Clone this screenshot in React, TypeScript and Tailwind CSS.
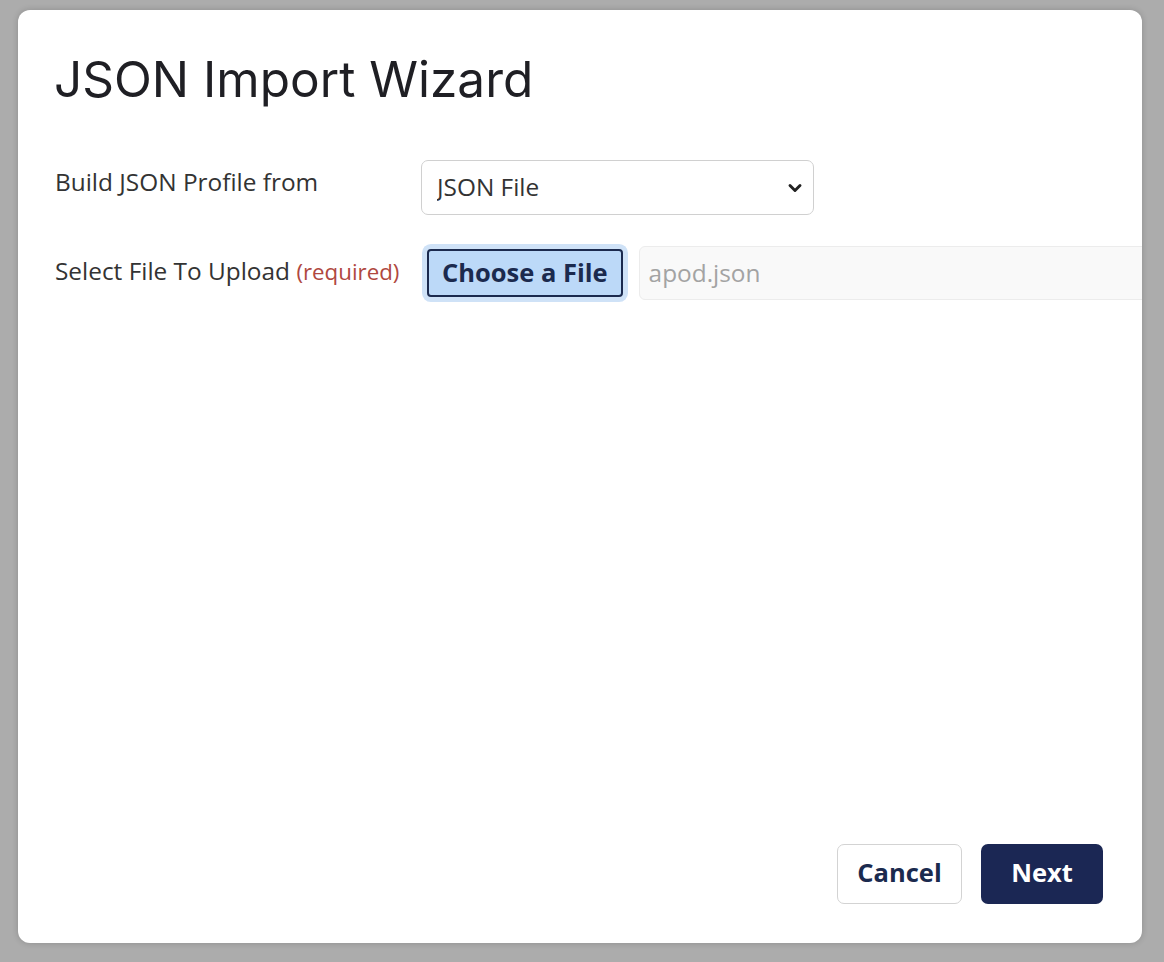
import { ChevronDown } from "lucide-react"

const labelFont = { fontFamily: '"Open Sans", "Noto Sans", sans-serif' }

const App = () => {
  return (
    <div className="h-[962px] w-full bg-[#acacac] pl-[18px] pt-[10px]">
      <div
        className="flex h-[933px] w-[1124px] flex-col overflow-hidden rounded-[12px] bg-white shadow-[0_0_6px_rgba(0,0,0,0.18)]"
        style={labelFont}
      >
        <h1
          className="pl-[36px] pt-[39px] text-[49.5px] leading-[60px] font-normal text-[#1f1f24]"
          style={{ fontFamily: 'Inter, "Noto Sans", sans-serif' }}
        >
          JSON Import Wizard
        </h1>

        <div className="mt-[51px] flex flex-col gap-[31px] pl-[37px]">
          <div className="flex items-start">
            <label className="w-[366px] shrink-0 pt-[6px] text-[24.4px] leading-[32px] text-[#333]">
              Build JSON Profile from
            </label>
            <div className="relative w-[393px] shrink-0">
              <select
                className="h-[55px] w-full appearance-none rounded-[7px] border border-[#d0d0d0] bg-white pl-[15px] text-[24.4px] text-[#333] outline-none"
                defaultValue="json"
              >
                <option value="json">JSON File</option>
                <option value="url">URL</option>
              </select>
              <ChevronDown
                className="pointer-events-none absolute right-[9px] top-[18px] h-[20px] w-[20px] text-[#222]"
                strokeWidth={3.5}
              />
            </div>
          </div>

          <div className="flex items-center">
            <label className="w-[366px] shrink-0 -mt-[4px] whitespace-nowrap text-[24.4px] leading-[32px] text-[#333]">
              Select File To Upload{" "}
              <span className="text-[22.3px] text-[#b0483f]">(required)</span>
            </label>
            <div className="flex shrink-0 items-center">
              <button
                type="button"
                className="ml-[6px] h-[48px] shrink-0 whitespace-nowrap rounded-[4px] border-2 border-[#1b2a4e] bg-[#bcd9f8] px-[13px] text-[25.5px] font-bold leading-none text-[#1b2a4e] shadow-[0_0_0_5px_#cfe2f7]"
              >
                Choose a File
              </button>
              <div className="ml-[16px] flex h-[54px] w-[520px] shrink-0 items-center rounded-[6px] border border-[#ececec] bg-[#f9f9f9] pl-[9px] text-[24.4px] text-[#a3a3a3]">
                apod.json
              </div>
            </div>
          </div>
        </div>

        <div className="mt-auto flex justify-end gap-[19px] pb-[39px] pr-[39px]">
          <button
            type="button"
            className="h-[60px] w-[125px] rounded-[7px] border border-[#d3d3d3] bg-white pb-[3px] text-[25.5px] font-bold text-[#1b2a4e]"
          >
            Cancel
          </button>
          <button
            type="button"
            className="h-[60px] w-[122px] rounded-[7px] bg-[#1b2754] pb-[3px] text-[25.5px] font-bold text-white"
          >
            Next
          </button>
        </div>
      </div>
    </div>
  )
}

export default App
